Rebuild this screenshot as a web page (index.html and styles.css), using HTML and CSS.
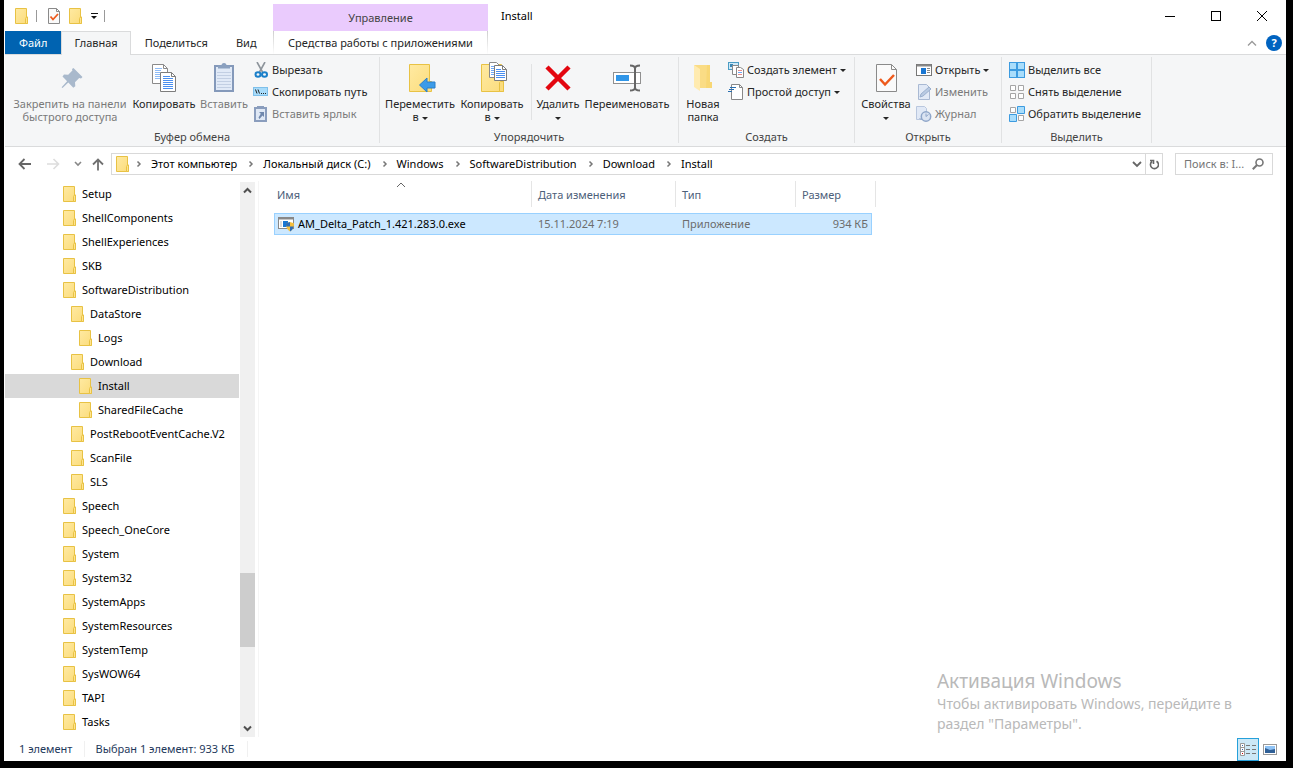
FILE: index.html
```html
<!DOCTYPE html>
<html lang="ru">
<head>
    <meta charset="UTF-8">
    <meta name="viewport" content="width=device-width, initial-scale=1.0">
    <title>Install</title>
    <link rel="stylesheet" href="styles.css">
</head>
<body>
    <svg class="sprite" xmlns="http://www.w3.org/2000/svg">
        <linearGradient id="gold" x1="0" y1="0" x2="1" y2="1">
            <stop offset="0" stop-color="#ffeaa2"/>
            <stop offset="1" stop-color="#fbdc7c"/>
        </linearGradient>
        <symbol id="folder" viewBox="0 0 16 16">
            <path d="M1.5.5h11v8.5h.8v6.5H1.5z" fill="url(#gold)" stroke="#e8c244"/>
            <path d="M11.5 15.500V10.500l1-1.500h1v6.500z" fill="#ffe48f" stroke="#e8c244"/>
        </symbol>
        <symbol id="doc-check" viewBox="0 0 16 16">
            <path d="M2.500.5h8l3 3v12h-11z" fill="#fafafa" stroke="#8a8a8a"/>
            <path d="M10.500.5v3h3" fill="none" stroke="#8a8a8a"/>
            <path d="M4.500 8.500l2.500 3 5-5.500" fill="none" stroke="#ee5a1c" stroke-width="1.800"/>
        </symbol>
        <symbol id="pages" viewBox="0 0 24 28">
            <path d="M.5.5h11l4 4v15H.5z" fill="#fff" stroke="#8a8a8a"/>
            <path d="M11.500.5v4h4" fill="none" stroke="#8a8a8a"/>
            <path d="M3 4.500h7M3 6.500h6M3 8.500h5M3 10.500h5M3 12.500h5M3 14.500h5" stroke="#8fbcf7"/>
            <path d="M8.500 8.500h11l4 4v15h-15z" fill="#fff" stroke="#7d7d7d"/>
            <path d="M19.500 8.500v4h4" fill="none" stroke="#7d7d7d"/>
            <path d="M11 12.500h7M11 14.500h10M11 16.500h10M11 18.500h10M11 20.500h10M11 22.500h10M11 24.500h10" stroke="#4a8ff0"/>
        </symbol>
        <symbol id="chevron" viewBox="0 0 6 8">
            <path d="M1.500 1.500L4 4 1.500 6.500" fill="none" stroke="#777" stroke-width="1.500"/>
        </symbol>
    </svg>

    <div class="window">
        <header class="top">
            <div class="quick-access">
                <svg class="i16"><use href="#folder"/></svg>
                <span class="bar"></span>
                <button type="button" aria-label="Свойства"><svg class="i16"><use href="#doc-check"/></svg></button>
                <button type="button" aria-label="Новая папка"><svg class="i16"><use href="#folder"/></svg></button>
                <button type="button" aria-label="Настройка панели"><svg width="8" height="8" viewBox="0 0 8 8"><path d="M1 1.500h7" stroke="#111"/><path d="M1 4h6L4 7z" fill="#111"/></svg></button>
                <span class="bar"></span>
            </div>
            <div class="context-title">Управление</div>
            <div class="title-row">
                <span class="title">Install</span>
                <div class="win-buttons">
                    <button type="button" aria-label="Свернуть"><svg width="10" height="10"><path d="M0 5.500h10" stroke="#000"/></svg></button>
                    <button type="button" aria-label="Развернуть"><svg width="10" height="10"><rect x=".5" y=".5" width="9" height="9" fill="none" stroke="#000"/></svg></button>
                    <button type="button" aria-label="Закрыть"><svg width="10" height="10"><path d="M0 0l10 10M10 0L0 10" stroke="#000"/></svg></button>
                </div>
            </div>
            <nav class="tabs">
                <button type="button" class="tab file">Файл</button>
                <button type="button" class="tab active">Главная</button>
                <button type="button" class="tab">Поделиться</button>
                <button type="button" class="tab">Вид</button>
            </nav>
            <button type="button" class="tab context-tab">Средства работы с приложениями</button>
            <div class="help">
                <button type="button" aria-label="Свернуть ленту"><svg width="10" height="6"><path d="M1 5.500l4-4 4 4" fill="none" stroke="#999" stroke-width="1.300"/></svg></button>
                <button type="button" class="help-btn" aria-label="Справка">?</button>
            </div>
        </header>

        <div class="ribbon">
            <section class="group clipboard">
                <div class="tools">
                    <button type="button" class="big w120" disabled>
                        <svg class="i32" viewBox="0 0 32 32"><path d="M19.500 6l9 9-1.500 1.500-1.800-.4-4.200 4.200.3 4-2 1.500-5-5.200-5.800 5.400-.9-.8 5.500-6-4.600-4.700 1.500-2 4.200.3 4.200-4.200-.4-1.500z" fill="#a9b9cc"/></svg>
                        <span>Закрепить на панели<br>быстрого доступа</span>
                    </button>
                    <button type="button" class="big w68">
                        <svg class="i32" viewBox="-4 -2 32 32"><use href="#pages" width="24" height="28"/></svg>
                        <span>Копировать</span>
                    </button>
                    <button type="button" class="big w52" disabled>
                        <svg class="i32" viewBox="0 0 32 32">
                            <rect x="7" y="4" width="18" height="25" fill="#e1eaf7" stroke="#8499ba" stroke-width="2"/>
                            <path d="M10 6V3.500h3.500a2.500 2.500 0 0 1 5 0H22V6.500H10z" fill="#8aa0bf"/>
                            <path d="M9 10.500h14M9 13.500h14M9 16.500h14M9 19.500h14M9 22.500h14M9 25.500h14" stroke="#c2cfe3"/>
                        </svg>
                        <span>Вставить</span>
                    </button>
                    <div class="small-list">
                        <button type="button" class="small">
                            <svg class="i16" viewBox="0 0 16 16"><path d="M4 0l5.500 10M12 0L6.500 10" stroke="#8d949b" stroke-width="1.600"/><ellipse cx="5" cy="12.500" rx="2.500" ry="2.300" fill="none" stroke="#1a7fc9" stroke-width="2"/><ellipse cx="11.500" cy="12.500" rx="2.500" ry="2.300" fill="none" stroke="#1a7fc9" stroke-width="2"/></svg>
                            Вырезать
                        </button>
                        <button type="button" class="small">
                            <svg class="i16" viewBox="0 0 16 16"><rect x=".5" y="3.500" width="14" height="8" fill="#a8dcfb" stroke="#7fc0ea"/><path d="M2.500 5.500l1.500 4M5 5.500l1.500 4" stroke="#222"/><path d="M8 9.500h1M10 9.500h1M12 9.500h1" stroke="#222"/></svg>
                            Скопировать путь
                        </button>
                        <button type="button" class="small" disabled>
                            <svg class="i16" viewBox="0 0 16 16"><rect x="2" y="2" width="11" height="13" fill="#dfe8f5" stroke="#8a9dbd" stroke-width="2"/><path d="M4 0h7v3H4z" fill="#8a9dbd"/><path d="M6 6h5v5L9.500 9.500 6.500 13 5.500 11.500 7.800 7.800z" fill="#7088ad"/></svg>
                            Вставить ярлык
                        </button>
                    </div>
                </div>
                <h2>Буфер обмена</h2>
            </section>

            <section class="group organize">
                <div class="tools">
                    <button type="button" class="big w72">
                        <svg class="i32" viewBox="0 0 32 32">
                            <path d="M5.500 2.500h20v17h2v10h-22z" fill="url(#gold)" stroke="#e8c244"/>
                            <path d="M15.500 23l7.500-7v4h8v6h-8v4z" fill="#3b9be8" stroke="#2b7fc9"/>
                        </svg>
                        <span>Переместить<br>в <i class="caret"></i></span>
                    </button>
                    <button type="button" class="big w72">
                        <svg class="i32" viewBox="0 0 32 32">
                            <path d="M5.500 2.500h20v17h2v10h-22z" fill="url(#gold)" stroke="#e8c244"/>
                            <path d="M23.500 29.500v-9l1-1h3v10z" fill="#fbdc7c" stroke="#e8c244"/>
                            <path d="M13.500.5h7l3 3v12h-10z" fill="#fff" stroke="#8a8a8a"/>
                            <path d="M15 4.500h4M15 6.500h4M15 8.500h4M15 10.500h4M15 12.500h4" stroke="#6fa8f5"/>
                            <path d="M18.500 3.500h8l4 4v11h-12z" fill="#fff" stroke="#7d7d7d"/>
                            <path d="M26.500 3.500v4h4" fill="none" stroke="#7d7d7d"/>
                            <path d="M20 7.500h5M20 9.500h9M20 11.500h9M20 13.500h9M20 15.500h9" stroke="#4a8ff0"/>
                        </svg>
                        <span>Копировать<br>в <i class="caret"></i></span>
                    </button>
                    <span class="divider"></span>
                    <button type="button" class="big w48">
                        <svg class="i32" viewBox="0 0 32 32"><path d="M5 5l22 22M27 5L5 27" stroke="#e3060f" stroke-width="4.500"/></svg>
                        <span>Удалить<br><i class="caret"></i></span>
                    </button>
                    <button type="button" class="big w90">
                        <svg class="i32" viewBox="0 0 32 32">
                            <rect x="2.500" y="10.500" width="27" height="11" fill="#fff" stroke="#909090"/>
                            <rect x="5" y="13" width="13" height="6" fill="#3096e8"/>
                            <path d="M19 3.500c4 0 5 1 5 3v19c0 2-1 3-5 3M29 3.500c-4 0-5 1-5 3v19c0 2 1 3 5 3" fill="none" stroke="#666" stroke-width="2"/>
                        </svg>
                        <span>Переименовать</span>
                    </button>
                </div>
                <h2>Упорядочить</h2>
            </section>

            <section class="group create">
                <div class="tools">
                    <button type="button" class="big w40">
                        <svg class="i32" viewBox="0 0 32 32"><path d="M7 3h14v18l3-1v6H11z" fill="#fadc85"/><path d="M20 3h3v17h2v6h-6z" fill="#f8d775"/><path d="M7 3l6 4v22l-6-4z" fill="#ffebb0"/></svg>
                        <span>Новая<br>папка</span>
                    </button>
                    <div class="small-list">
                        <button type="button" class="small">
                            <svg class="i16" viewBox="0 0 16 16"><rect x=".5" y=".5" width="10" height="7" fill="#cfe9f7" stroke="#4a9cc4"/><path d="M2 2h3v3H2z" fill="#3a87b4"/><path d="M4.500 3.500h6v9h-6z" fill="#fff" stroke="#888"/><path d="M8.500 5.500h4l3 2v8h-7z" fill="#fff" stroke="#888"/><path d="M10 8.500h4M10 12.500h4" stroke="#e68a8a"/><path d="M10 10.500h4" stroke="#6fa8f5"/></svg>
                            Создать элемент <i class="caret"></i>
                        </button>
                        <button type="button" class="small">
                            <svg class="i16" viewBox="0 0 16 16"><path d="M3.500.5h8l3 3v12h-11z" fill="#fff" stroke="#888"/><path d="M11.500.5v3h3" fill="none" stroke="#888"/><path d="M2 3.500h6M1 5.500h5M0 7.500h4" stroke="#2a6fb0"/></svg>
                            Простой доступ <i class="caret"></i>
                        </button>
                    </div>
                </div>
                <h2>Создать</h2>
            </section>

            <section class="group open">
                <div class="tools">
                    <button type="button" class="big w54">
                        <svg class="i32" viewBox="0 0 32 32"><path d="M6.500 2.500h15l5 5v22h-20z" fill="#fafafa" stroke="#8a8a8a"/><path d="M21.500 2.500v5h5" fill="none" stroke="#8a8a8a"/><path d="M10 17l5 5.500L24 13" fill="none" stroke="#ee5a1c" stroke-width="2.500"/></svg>
                        <span>Свойства<br><i class="caret"></i></span>
                    </button>
                    <div class="small-list">
                        <button type="button" class="small">
                            <svg class="i16" viewBox="0 0 16 16"><rect x=".5" y="2.500" width="15" height="11" fill="#fff" stroke="#777"/><path d="M1 3.500h14" stroke="#888" stroke-width="2"/><path d="M5 6h5v6H5z" fill="#1976d2"/><path d="M11 6.500h3M11 8.500h3M11 10.500h3" stroke="#888"/></svg>
                            Открыть <i class="caret"></i>
                        </button>
                        <button type="button" class="small" disabled>
                            <svg class="i16" viewBox="0 0 16 16"><path d="M2.500.5h8l3 3v12h-11z" fill="#e1e9f6" stroke="#a9b9d3"/><path d="M4 13l1-3 8-7 2 2-8 7z" fill="#b9cae2" stroke="#9bb0cf"/></svg>
                            Изменить
                        </button>
                        <button type="button" class="small" disabled>
                            <svg class="i16" viewBox="0 0 16 16"><path d="M.5.5h8l2 2v11H.5z" fill="#e1e9f6" stroke="#b9c7de"/><circle cx="10" cy="10.500" r="4.700" fill="#dbe4f2" stroke="#8fa6c9" stroke-width="1.500"/><path d="M10 7.500v3l2.500-2M5.500 14l-2-2" fill="none" stroke="#8fa6c9"/></svg>
                            Журнал
                        </button>
                    </div>
                </div>
                <h2>Открыть</h2>
            </section>

            <section class="group select">
                <div class="tools">
                    <div class="small-list">
                        <button type="button" class="small">
                            <svg class="i16" viewBox="0 0 16 16"><path d="M0 0h16v16H0z" fill="#3c9be0"/><path d="M1 1h6v6H1zM9 1h6v6H9zM1 9h6v6H1zM9 9h6v6H9z" fill="#a9ddfb"/></svg>
                            Выделить все
                        </button>
                        <button type="button" class="small">
                            <svg class="i16" viewBox="0 0 16 16"><path d="M1.500 1.500h5v5h-5zM9.500 1.500h5v5h-5zM1.500 9.500h5v5h-5zM9.500 9.500h5v5h-5z" fill="#fff" stroke="#a5a5a5"/></svg>
                            Снять выделение
                        </button>
                        <button type="button" class="small">
                            <svg class="i16" viewBox="0 0 16 16"><path d="M1.500 1.500h5v5h-5zM9.500 9.500h5v5h-5z" fill="#fff" stroke="#a5a5a5"/><path d="M8.500.5h7v7h-7zM.5 8.500h7v7h-7z" fill="#a9ddfb" stroke="#3c9be0"/></svg>
                            Обратить выделение
                        </button>
                    </div>
                </div>
                <h2>Выделить</h2>
            </section>
        </div>

        <div class="address-row">
            <button type="button" class="nav-btn" aria-label="Назад"><svg width="14" height="12"><path d="M13 6H1.500M6.500 1L1.500 6l5 5" fill="none" stroke="#666" stroke-width="1.800"/></svg></button>
            <button type="button" class="nav-btn" aria-label="Вперед"><svg width="14" height="12"><path d="M1 6h11.500M7.500 1l5 5-5 5" fill="none" stroke="#ddd" stroke-width="1.600"/></svg></button>
            <button type="button" class="history" aria-label="Последние расположения"><svg width="8" height="6"><path d="M1 1l3 3 3-3" fill="none" stroke="#888" stroke-width="1.600"/></svg></button>
            <button type="button" class="up" aria-label="Вверх"><svg width="12" height="13"><path d="M6 12.500V1.500M1 6.500l5-5 5 5" fill="none" stroke="#707070" stroke-width="1.800"/></svg></button>
            <div class="address">
                <svg class="i16"><use href="#folder"/></svg>
                <svg class="chev"><use href="#chevron"/></svg><a href="#">Этот компьютер</a>
                <svg class="chev"><use href="#chevron"/></svg><a href="#">Локальный диск (C:)</a>
                <svg class="chev"><use href="#chevron"/></svg><a href="#">Windows</a>
                <svg class="chev"><use href="#chevron"/></svg><a href="#">SoftwareDistribution</a>
                <svg class="chev"><use href="#chevron"/></svg><a href="#">Download</a>
                <svg class="chev"><use href="#chevron"/></svg><a href="#">Install</a>
                <button type="button" class="drop" aria-label="Предыдущие расположения"><svg width="10" height="7"><path d="M1 1l4 4 4-4" fill="none" stroke="#666" stroke-width="1.800"/></svg></button>
                <button type="button" class="refresh" aria-label="Обновить"><svg width="10" height="12"><path d="M7.500 3.200a4 4 0 1 1-4.500.3M1 2.500h3.500V6" fill="none" stroke="#666" stroke-width="1.600"/></svg></button>
            </div>
            <label class="search">
                <input type="text" placeholder="Поиск в: I..." aria-label="Поиск">
                <svg width="12" height="12"><circle cx="7.500" cy="4.500" r="3.500" fill="none" stroke="#777" stroke-width="1.600"/><path d="M5 7L.8 11.200" stroke="#777" stroke-width="2"/></svg>
            </label>
        </div>

        <main class="content">
            <ul class="tree">
                <li><a href="#"><svg class="i16"><use href="#folder"/></svg>Setup</a></li>
                <li><a href="#"><svg class="i16"><use href="#folder"/></svg>ShellComponents</a></li>
                <li><a href="#"><svg class="i16"><use href="#folder"/></svg>ShellExperiences</a></li>
                <li><a href="#"><svg class="i16"><use href="#folder"/></svg>SKB</a></li>
                <li><a href="#"><svg class="i16"><use href="#folder"/></svg>SoftwareDistribution</a></li>
                <li><a href="#" class="l2"><svg class="i16"><use href="#folder"/></svg>DataStore</a></li>
                <li><a href="#" class="l3"><svg class="i16"><use href="#folder"/></svg>Logs</a></li>
                <li><a href="#" class="l2"><svg class="i16"><use href="#folder"/></svg>Download</a></li>
                <li><a href="#" class="l3 current"><svg class="i16"><use href="#folder"/></svg>Install</a></li>
                <li><a href="#" class="l3"><svg class="i16"><use href="#folder"/></svg>SharedFileCache</a></li>
                <li><a href="#" class="l2"><svg class="i16"><use href="#folder"/></svg>PostRebootEventCache.V2</a></li>
                <li><a href="#" class="l2"><svg class="i16"><use href="#folder"/></svg>ScanFile</a></li>
                <li><a href="#" class="l2"><svg class="i16"><use href="#folder"/></svg>SLS</a></li>
                <li><a href="#"><svg class="i16"><use href="#folder"/></svg>Speech</a></li>
                <li><a href="#"><svg class="i16"><use href="#folder"/></svg>Speech_OneCore</a></li>
                <li><a href="#"><svg class="i16"><use href="#folder"/></svg>System</a></li>
                <li><a href="#"><svg class="i16"><use href="#folder"/></svg>System32</a></li>
                <li><a href="#"><svg class="i16"><use href="#folder"/></svg>SystemApps</a></li>
                <li><a href="#"><svg class="i16"><use href="#folder"/></svg>SystemResources</a></li>
                <li><a href="#"><svg class="i16"><use href="#folder"/></svg>SystemTemp</a></li>
                <li><a href="#"><svg class="i16"><use href="#folder"/></svg>SysWOW64</a></li>
                <li><a href="#"><svg class="i16"><use href="#folder"/></svg>TAPI</a></li>
                <li><a href="#"><svg class="i16"><use href="#folder"/></svg>Tasks</a></li>
            </ul>
            <div class="scrollbar">
                <button type="button" aria-label="Прокрутить вверх"><svg width="9" height="7"><path d="M1 5.500L4.500 2 8 5.500" fill="none" stroke="#505050" stroke-width="2"/></svg></button>
                <span class="before"></span>
                <span class="thumb"></span>
                <span class="after"></span>
                <button type="button" aria-label="Прокрутить вниз"><svg width="9" height="7"><path d="M1 1.500L4.500 5 8 1.500" fill="none" stroke="#505050" stroke-width="2"/></svg></button>
            </div>
            <div class="files">
                <table>
                    <thead>
                        <tr>
                            <th class="name">Имя<svg class="sort" width="10" height="6"><path d="M1 5l4-4 4 4" fill="none" stroke="#666"/></svg></th>
                            <th class="date">Дата изменения</th>
                            <th class="type">Тип</th>
                            <th class="size">Размер</th>
                        </tr>
                    </thead>
                    <tbody>
                        <tr>
                            <td class="name"><div class="file-name">
                                <svg class="i16" viewBox="0 0 16 16"><rect x=".5" y="1.500" width="15" height="11" fill="#fff" stroke="#888"/><path d="M1 2.500h14" stroke="#888" stroke-width="2"/><path d="M3 5v6" stroke="#bbb"/><path d="M5 5h5v6H5z" fill="#1976d2"/><path d="M12 6l4 1.200c0 4-1 6.300-4 8.300-3-2-4-4.300-4-8.300z" fill="#f6bf3c"/><path d="M12 6v4.500H8.400C8 9 8 8 8 7.200zM12 10.500h3.600c-.4 2.200-1.400 3.700-3.600 5z" fill="#2d6cb5"/></svg>
                                AM_Delta_Patch_1.421.283.0.exe</div></td>
                            <td>15.11.2024 7:19</td>
                            <td>Приложение</td>
                            <td class="right">934 КБ</td>
                        </tr>
                    </tbody>
                </table>
                <div class="watermark">
                    <strong>Активация Windows</strong>
                    <p>Чтобы активировать Windows, перейдите в<br>раздел "Параметры".</p>
                </div>
            </div>
        </main>

        <footer class="status">
            <span>1 элемент</span>
            <span>Выбран 1 элемент: 933 КБ</span>
            <div class="views">
                <button type="button" class="on" aria-label="Таблица"><svg width="16" height="13"><path d="M.5.5h4v12h-4zM.5 4.500h4M.5 8.500h4" fill="#fff" stroke="#999"/><path d="M2 2.500h1M2 6.500h1" stroke="#36a"/><path d="M2 10.500h1" stroke="#c00"/><path d="M6 2.500h4M12 2.500h4M6 6.500h4M12 6.500h4M6 10.500h4M12 10.500h4" stroke="#777"/></svg></button>
                <button type="button" aria-label="Крупные значки"><svg width="14" height="11"><rect x=".5" y=".5" width="13" height="10" fill="#fff" stroke="#999"/><path d="M2 2h10v4H2z" fill="#8fc3f5"/><path d="M2 4l5 2 5-1v4H2z" fill="#2f5f96"/></svg></button>
            </div>
        </footer>
    </div>
</body>
</html>
```
FILE: styles.css
```css
* {
    box-sizing: border-box;
}
body {
    margin: 0;
    padding: 0 7px 7px 4px;
    background: #000;
    font-family: 'Noto Sans', sans-serif;
    font-size: 11px;
    line-height: 16px;
    color: #000;
}
button {
    font: inherit;
    color: inherit;
    background: none;
    border: 0;
    padding: 0;
}
svg {
    display: block;
    flex: none;
}
a {
    color: inherit;
    text-decoration: none;
}
.sprite {
    position: absolute;
    width: 0;
    height: 0;
}
.i16 {
    width: 16px;
    height: 16px;
}
.i32 {
    width: 32px;
    height: 32px;
}
.window {
    background: #fff;
    padding-left: 1px;
}

/* title bar and tabs */
.top {
    display: grid;
    grid-template-columns: 268px 215px 1fr;
    grid-template-rows: 31px 23px;
}
.quick-access {
    display: flex;
    align-items: center;
    gap: 6px;
    padding-left: 9px;
}
.bar {
    width: 1px;
    height: 12px;
    margin-right: 3px;
    background: #999;
}
.context-title {
    margin-top: 4px;
    background: #eacbfd;
    color: #444;
    text-align: center;
    line-height: 28px;
}
.title-row {
    display: flex;
    justify-content: space-between;
    padding-right: 1px;
}
.title {
    padding-left: 13px;
    line-height: 32px;
}
.win-buttons {
    display: flex;
}
.win-buttons button {
    width: 46px;
    display: flex;
    align-items: center;
    justify-content: center;
}
.tabs {
    display: flex;
}
.tab {
    padding: 0 14px;
    color: #262626;
}
.tab.file {
    background: #0063b1;
    color: #fff;
}
.tab.active {
    background: #f5f6f7;
    border: 1px solid #dadbdc;
    border-bottom: 0;
    height: 24px;
    padding: 0 12px 2px;
    z-index: 1;
}
.context-tab {
    border: solid;
    border-width: 0 1px;
    border-image: linear-gradient(#ccc, #fff) 1;
    padding: 0;
}
.help {
    display: flex;
    align-items: center;
    justify-content: flex-end;
    gap: 9px;
    padding-right: 4px;
}
.help-btn {
    width: 16px;
    height: 16px;
    border-radius: 50%;
    background: #0063c0;
    color: #fff;
    font-weight: 700;
}

/* ribbon */
.ribbon {
    display: flex;
    height: 93px;
    padding-top: 2px;
    background: #f5f6f7;
    border-top: 1px solid #dadbdc;
    border-bottom: 1px solid #dadbdc;
    color: #262626;
}
.group {
    display: flex;
    flex-direction: column;
    justify-content: space-between;
    margin-bottom: 3px;
    border-right: 1px solid #e1e2e3;
}
.group h2 {
    margin: 0;
    font-size: 11px;
    font-weight: 400;
    line-height: 12px;
    text-align: center;
    color: #444;
}
.clipboard {
    width: 375px;
}
.organize {
    width: 299px;
}
.create {
    width: 176px;
}
.open {
    width: 147px;
}
.select {
    width: 150px;
}
.tools {
    display: flex;
    padding: 2px 0 0 4px;
}
.clipboard .tools {
    padding-left: 5px;
}
.big {
    display: flex;
    flex-direction: column;
    align-items: center;
    gap: 3px;
    padding-top: 3px;
    line-height: 13px;
    white-space: nowrap;
}
.w40 {
    width: 40px;
}
.w48 {
    width: 48px;
}
.w52 {
    width: 52px;
}
.w54 {
    width: 54px;
}
.w68 {
    width: 68px;
}
.w72 {
    width: 72px;
}
.w90 {
    width: 90px;
}
.w120 {
    width: 120px;
}
.divider {
    width: 1px;
    height: 56px;
    margin: 5px 2px 0 3px;
    background: #e1e2e3;
}
.small-list {
    padding-left: 3px;
}
.create .small-list {
    padding-left: 5px;
}
.small {
    display: flex;
    align-items: center;
    gap: 3px;
    height: 22px;
    white-space: nowrap;
}
.big:disabled,
.small:disabled {
    color: #7a7a7a;
}
.caret {
    display: inline-block;
    border: 3px solid transparent;
    border-top-color: #262626;
    border-bottom: 0;
    vertical-align: middle;
}

/* address bar */
.address-row {
    display: flex;
    align-items: center;
    height: 34px;
    padding: 0 13px;
}
.nav-btn {
    width: 28px;
}
.history {
    width: 18px;
}
.up {
    width: 19px;
}
.address {
    flex: 1;
    display: flex;
    align-items: center;
    height: 22px;
    padding-left: 3px;
    border: 1px solid #d9d9d9;
}
.chev {
    width: 6px;
    height: 8px;
    margin: 0 9px 0 11px;
}
.address .i16 + .chev {
    margin-left: 5px;
}
.drop {
    margin-left: auto;
    padding-right: 3px;
}
.refresh {
    width: 17px;
    height: 20px;
    display: flex;
    align-items: center;
    justify-content: center;
    border-left: 1px solid #d9d9d9;
}
.search {
    display: flex;
    align-items: center;
    width: 98px;
    height: 22px;
    margin-left: 12px;
    padding: 0 8px;
    border: 1px solid #d9d9d9;
}
.search input {
    flex: 1;
    min-width: 0;
    border: 0;
    padding: 0;
    font: inherit;
}
.search input::placeholder {
    color: #757575;
}

/* folder tree and files */
.content {
    display: flex;
}
.tree {
    width: 234px;
    margin: 0;
    padding: 1px 0 3px;
    list-style: none;
}
.tree a {
    display: flex;
    align-items: center;
    gap: 4px;
    height: 24px;
    padding-left: 57px;
}
.tree .l2 {
    padding-left: 65px;
}
.tree .l3 {
    padding-left: 73px;
}
.tree .current {
    background: #d9d9d9;
}
.scrollbar {
    display: flex;
    flex-direction: column;
    width: 15px;
    margin: 1px 3px 0 1px;
    background: #f0f0f0;
}
.scrollbar button {
    height: 17px;
    display: flex;
    align-items: center;
    justify-content: center;
}
.before {
    flex: 374;
}
.thumb {
    height: 74px;
    background: #cdcdcd;
}
.after {
    flex: 73;
}
.files {
    position: relative;
    flex: 1;
    padding-left: 15px;
    border-left: 1px solid #f5f5f5;
}
table {
    width: 598px;
    table-layout: fixed;
    border-spacing: 0;
}
th {
    position: relative;
    height: 27px;
    padding: 0 0 0 6px;
    text-align: left;
    font-weight: 400;
    color: #4c607a;
}
th::after {
    content: '';
    position: absolute;
    top: 0;
    right: 0;
    width: 1px;
    height: 26px;
    background: #e5e5e5;
}
th.name {
    width: 258px;
    padding-left: 3px;
}
th.date {
    width: 144px;
}
th.type {
    width: 120px;
}
th.size::after {
    right: -4px;
}
.sort {
    position: absolute;
    top: 1px;
    left: 122px;
}
tbody::before {
    content: '';
    display: block;
    height: 5px;
}
td {
    height: 22px;
    padding: 0 0 0 6px;
    background: #cce8ff;
    border-top: 1px solid #99d1ff;
    border-bottom: 1px solid #99d1ff;
    color: #6d6d6d;
}
td.name {
    padding-left: 3px;
    border-left: 1px solid #99d1ff;
    color: #000;
}
td.right {
    padding-right: 3px;
    border-right: 1px solid #99d1ff;
    text-align: right;
}
.file-name {
    display: flex;
    align-items: center;
    gap: 4px;
}
.watermark {
    position: absolute;
    right: 54px;
    bottom: 3px;
    color: #b9b9b9;
    font-size: 14px;
    line-height: 20px;
}
.watermark strong {
    display: block;
    font-size: 19px;
    font-weight: 400;
    line-height: 26px;
}
.watermark p {
    margin: 0;
}

/* status bar */
.status {
    display: flex;
    align-items: center;
    height: 24px;
    color: #1e395b;
}
.status span {
    padding: 0 12px 0 14px;
    border-right: 1px solid #f0f0f0;
}
.status span + span {
    padding-left: 10px;
}
.views {
    display: flex;
    margin-left: auto;
    padding-right: 5px;
}
.views button {
    width: 22px;
    height: 23px;
    display: flex;
    align-items: center;
    justify-content: center;
    border: 1px solid transparent;
}
.views .on {
    background: #cce8f6;
    border-color: #26a0da;
}
```
